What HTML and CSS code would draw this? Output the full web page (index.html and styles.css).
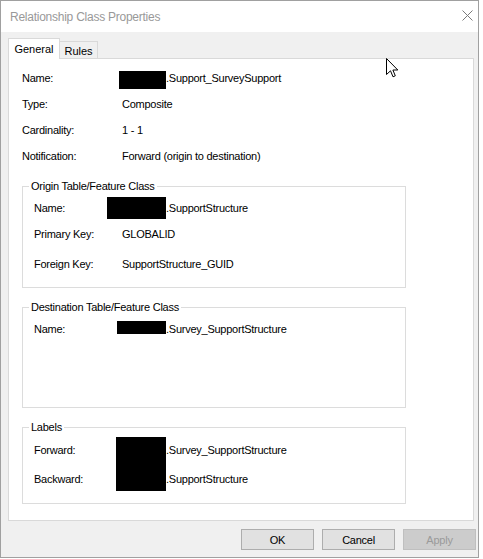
FILE: index.html
```html
<!DOCTYPE html>
<html>
<head>
<meta charset="utf-8">
<link rel="stylesheet" href="styles.css">
</head>
<body>
<div class="window">
  <div class="titlebar">
    <span class="title">Relationship Class Properties</span>
    <svg class="close" width="11" height="11" viewBox="0 0 11 11"><path d="M0.5 0.5 L10.5 10.5 M10.5 0.5 L0.5 10.5" stroke="#7a7a7a" stroke-width="1" fill="none"/></svg>
  </div>
  <div class="client">
    <div class="tabs">
      <div class="tab active">General</div>
      <div class="tab">Rules</div>
    </div>
    <div class="panel">
      <div class="props">
        <div class="lbl">Name:</div>
        <div class="val"><span class="redact r-top"></span>.Support_SurveySupport</div>
        <div class="lbl">Type:</div>
        <div class="val">Composite</div>
        <div class="lbl">Cardinality:</div>
        <div class="val">1 - 1</div>
        <div class="lbl">Notification:</div>
        <div class="val">Forward (origin to destination)</div>
      </div>

      <fieldset class="group">
        <legend>Origin Table/Feature Class</legend>
        <div class="rows origin">
          <div class="lbl">Name:</div>
          <div class="val"><span class="redact r-origin"></span>.SupportStructure</div>
          <div class="lbl">Primary Key:</div>
          <div class="val">GLOBALID</div>
          <div class="lbl">Foreign Key:</div>
          <div class="val">SupportStructure_GUID</div>
        </div>
      </fieldset>

      <fieldset class="group">
        <legend>Destination Table/Feature Class</legend>
        <div class="rows dest">
          <div class="lbl">Name:</div>
          <div class="val"><span class="redact r-dest"></span>.Survey_SupportStructure</div>
        </div>
      </fieldset>

      <fieldset class="group">
        <legend>Labels</legend>
        <div class="rows labels">
          <div class="lbl">Forward:</div>
          <span class="redact r-labels"></span>
          <div class="val">.Survey_SupportStructure</div>
          <div class="lbl">Backward:</div>
          <div class="val">.SupportStructure</div>
        </div>
      </fieldset>
    </div>
    <div class="buttons">
      <button class="btn">OK</button>
      <button class="btn">Cancel</button>
      <button class="btn disabled">Apply</button>
    </div>
  </div>
  <svg class="cursor" width="13" height="20" viewBox="0 0 13 20"><path d="M0.5 0.5 V16.5 L4.5 12.8 L7 18.8 L9.3 17.8 L6.9 12 H11.8 Z" fill="#fff" stroke="#000" stroke-width="1" stroke-linejoin="miter"/></svg>
</div>
</body>
</html>
```

FILE: styles.css
```css
body {
  margin: 0;
  background: #ffffff;
}

.window {
  position: relative;
  width: 479px;
  height: 558px;
  box-sizing: border-box;
  border: 1px solid #a0a0a0;
  background: #f0f0f0;
  font-family: "Liberation Sans", Arial, sans-serif;
  font-size: 11px;
  letter-spacing: -0.25px;
  color: #000;
}

.titlebar {
  height: 31px;
  background: #fff;
  display: flex;
  align-items: center;
  justify-content: space-between;
  padding: 0 5px 0 9px;
}

.title {
  font-size: 12px;
  color: #999999;
  line-height: 16px;
}

.close {
  display: block;
  margin-bottom: 3px;
}

.client {
  padding: 6px 2px 0 7px;
}

.tabs {
  display: flex;
  align-items: flex-end;
  height: 20px;
  position: relative;
  z-index: 1;
}

.tab {
  box-sizing: border-box;
  border: 1px solid #d9d9d9;
  border-bottom: none;
  background: #f0f0f0;
  display: flex;
  align-items: center;
  justify-content: center;
  width: 39px;
  height: 17px;
  margin-left: -1px;
  font-size: 11px;
  letter-spacing: 0;
  padding-top: 1px;
}

.tab.active {
  width: 52px;
  height: 21px;
  margin-left: 0;
  margin-bottom: -1px;
  background: #fff;
  position: relative;
  z-index: 2;
  padding-top: 0;
  padding-bottom: 1px;
}

.panel {
  box-sizing: border-box;
  width: 466px;
  height: 463px;
  border: 1px solid #d9d9d9;
  background: #fff;
  padding: 6px 0 0 13px;
}

.props {
  display: grid;
  grid-template-columns: 100px auto;
  grid-auto-rows: 26px;
  align-items: center;
}

.val {
  display: flex;
  align-items: center;
  white-space: nowrap;
}

.redact {
  display: block;
  background: #000;
  flex: none;
}

.r-top {
  width: 47px;
  height: 18px;
  margin-left: -3px;
  margin-top: 4px;
}

.group {
  box-sizing: border-box;
  width: 384px;
  margin: 12px 0 0 0;
  padding: 0;
  border: 1px solid #dcdcdc;
  min-width: 0;
}

.group:first-of-type {
  margin-top: 10px;
}

.group legend {
  margin-left: 6px;
  padding: 0 2px;
  line-height: 14px;
  font-size: 11px;
}

.rows {
  display: grid;
  margin-left: 11px;
  grid-template-columns: 88px auto;
  align-items: center;
}

.origin {
  grid-template-rows: 30px 22px 38px;
  padding-bottom: 4px;
}

.r-origin {
  width: 59px;
  height: 22px;
  margin-left: -15px;
  align-self: flex-start;
}

.origin .val:first-of-type {
  align-self: stretch;
}

.dest {
  grid-template-rows: 30px;
  padding-bottom: 63px;
}

.r-dest {
  width: 49px;
  height: 13px;
  margin-left: -5px;
  margin-bottom: 3px;
}

.labels {
  grid-template-columns: 82px 50px auto;
  grid-template-rows: 32px 26px;
  padding-bottom: 11px;
}

.labels .lbl:nth-of-type(2) {
  grid-row: 2;
  grid-column: 1;
}

.labels .val {
  grid-column: 3;
}

.r-labels {
  grid-row: 1 / 3;
  grid-column: 2;
  align-self: start;
  width: 50px;
  height: 54px;
  margin-top: 3px;
}

.buttons {
  display: flex;
  justify-content: flex-end;
  gap: 8px;
  margin-top: 8px;
}

.btn {
  box-sizing: border-box;
  width: 73px;
  height: 21px;
  padding: 0;
  border: 1px solid #adadad;
  background: #e1e1e1;
  font-family: "Liberation Sans", Arial, sans-serif;
  font-size: 11px;
  letter-spacing: -0.25px;
  color: #000;
}

.btn.disabled {
  background: #cccccc;
  border-color: #bfbfbf;
  color: #9a9a9a;
}

.cursor {
  position: absolute;
  left: 385px;
  top: 57px;
}
```
